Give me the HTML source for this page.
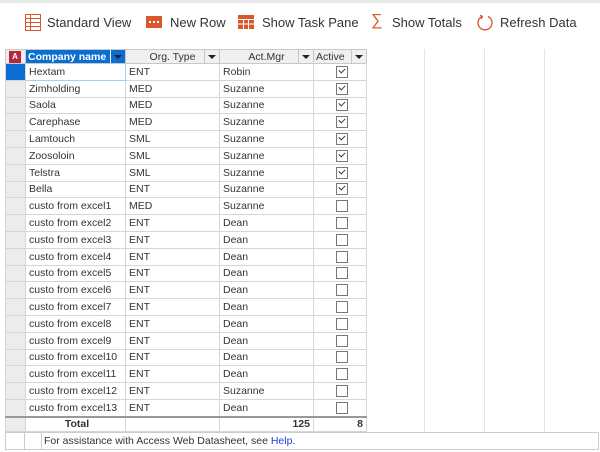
<!DOCTYPE html><html><head><style>
body{margin:0;width:600px;height:452px;background:#fff;font-family:"Liberation Sans",sans-serif;position:relative;overflow:hidden}
.top{position:absolute;left:0;top:0;width:600px;height:3px;background:#e8e8e8}
.tb{position:absolute;top:15px;font-size:13px;color:#333}
.ic{position:absolute;top:14px}
table{position:absolute;left:5px;top:49px;border-collapse:collapse;font-size:10.5px;color:#333;table-layout:fixed}
td{border:1px solid #d6d6d6;height:15.8px;padding:0 0 0 3px;white-space:nowrap;overflow:hidden;line-height:14px}
td.s{background:#ececec;padding:0}
th{height:13px;font-weight:normal;font-size:10.5px;background:#f0f0f0;border:1px solid #c8c8c8;padding:0;position:relative;text-align:center}
.dd{position:absolute;right:0;top:0;width:14px;height:13px;border-left:1px solid #c8c8c8}
.dd:after{content:"";position:absolute;left:3px;top:5px;border-left:4px solid transparent;border-right:4px solid transparent;border-top:4px solid #222}
.cb{display:block;margin:0 auto;width:10px;height:10px;border:1px solid #777;background:#fff;position:relative}
.cb.k:after{content:"";position:absolute;left:2px;top:1px;width:5px;height:3px;border-left:1px solid #333;border-bottom:1px solid #333;transform:rotate(-45deg)}
.g{position:absolute;top:49px;height:383px;width:1px;background:#e4e4e4}
tr.t td{height:13px;line-height:13px}
</style></head><body>
<div class="top"></div>
<svg class="ic" style="left:25px" width="16" height="17" viewBox="0 0 16 17"><rect x="0.5" y="0.5" width="15" height="16" fill="none" stroke="#d9582b"/><path d="M0 4.5H16M0 8.5H16M0 12.5H16M5.5 0V17" stroke="#d9582b"/></svg>
<div class="tb" style="left:47px">Standard View</div>
<svg class="ic" style="left:146px;top:16px" width="16" height="12"><rect x="0" y="0" width="16" height="12" fill="#d9582b"/><path d="M3 6h2M7 6h2M11 6h2" stroke="#fff" stroke-width="2"/></svg>
<div class="tb" style="left:170px">New Row</div>
<svg class="ic" style="left:238px;top:15px" width="16" height="14"><rect width="16" height="14" fill="#d9582b"/><path d="M0 4.5H16M0 9H16M5.5 4V14M10.5 4V14" stroke="#fff"/></svg>
<div class="tb" style="left:262px">Show Task Pane</div>
<div class="tb" style="left:371px;color:#d9582b;font-size:16px;top:12px">∑</div>
<div class="tb" style="left:392px">Show Totals</div>
<svg class="ic" style="left:477px" width="16" height="17" viewBox="0 0 16 17"><path d="M5 2.5A7 7 0 1 0 11 2.5" fill="none" stroke="#d9582b" stroke-width="1.3"/><path d="M3 1L5.5 2.5L4 5" fill="none" stroke="#d9582b" stroke-width="1.2"/></svg>
<div class="tb" style="left:500px">Refresh Data</div>
<div class="g" style="left:424px"></div><div class="g" style="left:484px"></div><div class="g" style="left:544px"></div>
<table>
<colgroup><col style="width:20px"><col style="width:100px"><col style="width:94px"><col style="width:94px"><col style="width:53px"></colgroup>
<tr><th style="background:#eee"><span style="position:absolute;left:3px;top:1px;width:12px;height:12px;background:#b7263b;color:#fff;font-size:8px;font-weight:bold;line-height:12px">A</span></th><th style="background:#0a6fd1;color:#fff;font-weight:bold;text-align:left;padding-left:2px">Company name<span class="dd" style="border-color:#fff"></span></th><th>Org. Type<span class="dd"></span></th><th>Act.Mgr<span class="dd"></span></th><th style="text-align:left;padding-left:2px">Active<span class="dd"></span></th></tr>
<tr><td class="s" style="background:#0a6fd1"></td><td style="border:1px solid #a9cdee">Hextam</td><td>ENT</td><td>Robin</td><td><span class="cb k"></span></td></tr>
<tr><td class="s"></td><td>Zimholding</td><td>MED</td><td>Suzanne</td><td><span class="cb k"></span></td></tr>
<tr><td class="s"></td><td>Saola</td><td>MED</td><td>Suzanne</td><td><span class="cb k"></span></td></tr>
<tr><td class="s"></td><td>Carephase</td><td>MED</td><td>Suzanne</td><td><span class="cb k"></span></td></tr>
<tr><td class="s"></td><td>Lamtouch</td><td>SML</td><td>Suzanne</td><td><span class="cb k"></span></td></tr>
<tr><td class="s"></td><td>Zoosoloin</td><td>SML</td><td>Suzanne</td><td><span class="cb k"></span></td></tr>
<tr><td class="s"></td><td>Telstra</td><td>SML</td><td>Suzanne</td><td><span class="cb k"></span></td></tr>
<tr><td class="s"></td><td>Bella</td><td>ENT</td><td>Suzanne</td><td><span class="cb k"></span></td></tr>
<tr><td class="s"></td><td>custo from excel1</td><td>MED</td><td>Suzanne</td><td><span class="cb"></span></td></tr>
<tr><td class="s"></td><td>custo from excel2</td><td>ENT</td><td>Dean</td><td><span class="cb"></span></td></tr>
<tr><td class="s"></td><td>custo from excel3</td><td>ENT</td><td>Dean</td><td><span class="cb"></span></td></tr>
<tr><td class="s"></td><td>custo from excel4</td><td>ENT</td><td>Dean</td><td><span class="cb"></span></td></tr>
<tr><td class="s"></td><td>custo from excel5</td><td>ENT</td><td>Dean</td><td><span class="cb"></span></td></tr>
<tr><td class="s"></td><td>custo from excel6</td><td>ENT</td><td>Dean</td><td><span class="cb"></span></td></tr>
<tr><td class="s"></td><td>custo from excel7</td><td>ENT</td><td>Dean</td><td><span class="cb"></span></td></tr>
<tr><td class="s"></td><td>custo from excel8</td><td>ENT</td><td>Dean</td><td><span class="cb"></span></td></tr>
<tr><td class="s"></td><td>custo from excel9</td><td>ENT</td><td>Dean</td><td><span class="cb"></span></td></tr>
<tr><td class="s"></td><td>custo from excel10</td><td>ENT</td><td>Dean</td><td><span class="cb"></span></td></tr>
<tr><td class="s"></td><td>custo from excel11</td><td>ENT</td><td>Dean</td><td><span class="cb"></span></td></tr>
<tr><td class="s"></td><td>custo from excel12</td><td>ENT</td><td>Suzanne</td><td><span class="cb"></span></td></tr>
<tr><td class="s"></td><td>custo from excel13</td><td>ENT</td><td>Dean</td><td><span class="cb"></span></td></tr>
<tr class="t" style="border-top:2px solid #999"><td class="s"></td><td style="text-align:center;font-weight:bold">Total</td><td></td><td style="text-align:right;padding-right:3px;font-weight:bold">125</td><td style="text-align:right;padding-right:3px;font-weight:bold">8</td></tr>
</table>
<div style="position:absolute;left:5px;top:432px;width:594px;height:18px;border:1px solid #ccc;box-sizing:border-box;font-size:10.5px;color:#333;background:#fff">
<div style="position:absolute;left:18px;top:0;width:1px;height:16px;background:#ccc"></div>
<div style="position:absolute;left:35px;top:0;width:1px;height:16px;background:#ccc"></div>
<div style="position:absolute;left:38px;top:2px">For assistance with Access Web Datasheet, see <span style="color:#1a3fe0">Help</span>.</div></div>
</body></html>
